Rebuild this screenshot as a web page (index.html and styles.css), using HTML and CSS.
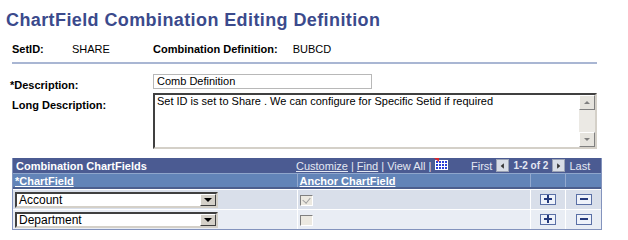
FILE: index.html
```html
<!DOCTYPE html>
<html lang="en">
  <head>
    <meta charset="UTF-8" />
    <title>ChartField Combination Editing Definition</title>
    <link rel="stylesheet" href="styles.css">
  </head>
  <body>
    <h1 class="page-title">ChartField Combination Editing Definition</h1>

    <div class="key-row">
      <span class="key-label setid-label">SetID:</span>
      <span class="key-value setid-value">SHARE</span>
      <span class="key-label">Combination Definition:</span>
      <span class="key-value">BUBCD</span>
    </div>
    <div class="divider"></div>

    <div class="field-row descr-row">
      <label class="field-label req">*Description:</label>
      <div class="text-input">Comb Definition</div>
    </div>
    <div class="field-row long-row">
      <label class="field-label">Long Description:</label>
      <div class="text-area">
        <div class="text-area-body">Set ID is set to Share . We can configure for Specific Setid if required</div>
        <div class="scrollbar">
          <span class="scroll-btn up"></span>
          <span class="scroll-track"></span>
          <span class="scroll-btn down"></span>
        </div>
      </div>
    </div>

    <div class="grid">
      <div class="grid-title">
        <span class="grid-name">Combination ChartFields</span>
        <span class="grid-tools">
          <a href="#">Customize</a> | <a href="#">Find</a> | View All |
          <svg class="grid-icon" viewBox="0 0 14 12" width="14" height="12">
            <rect x="1" y="2" width="13" height="10" fill="#ffffff" />
            <g fill="#2b3fd8">
              <rect x="2" y="3" width="2" height="2" /><rect x="5" y="3" width="2" height="2" /><rect x="8" y="3" width="2" height="2" /><rect x="11" y="3" width="2" height="2" />
              <rect x="2" y="6" width="2" height="2" /><rect x="5" y="6" width="2" height="2" /><rect x="8" y="6" width="2" height="2" /><rect x="11" y="6" width="2" height="2" />
              <rect x="2" y="9" width="2" height="2" /><rect x="5" y="9" width="2" height="2" /><rect x="8" y="9" width="2" height="2" /><rect x="11" y="9" width="2" height="2" />
            </g>
            <path d="M0 0 L5 0 L5 4 Z" fill="#d8262e" />
          </svg>
        </span>
        <span class="grid-nav">
          First
          <span class="nav-btn"><svg viewBox="0 0 12 12" width="12" height="12"><path d="M7.5 3 L7.5 9 L4 6 Z" fill="#333" /></svg></span>
          <span class="nav-count">1-2 of 2</span>
          <span class="nav-btn"><svg viewBox="0 0 12 12" width="12" height="12"><path d="M4.5 3 L4.5 9 L8 6 Z" fill="#333" /></svg></span>
          Last
        </span>
      </div>

      <div class="grid-row grid-head">
        <div class="cell col-field"><a href="#">*ChartField</a></div>
        <div class="cell col-anchor"><a href="#">Anchor ChartField</a></div>
        <div class="cell col-btn"></div>
        <div class="cell col-btn"></div>
      </div>

      <div class="grid-row odd">
        <div class="cell col-field">
          <div class="select">
            <span class="select-text">Account</span>
            <span class="select-arrow"></span>
          </div>
        </div>
        <div class="cell col-anchor"><span class="checkbox checked"></span></div>
        <div class="cell col-btn"><span class="row-btn plus"></span></div>
        <div class="cell col-btn"><span class="row-btn minus"></span></div>
      </div>

      <div class="grid-row even">
        <div class="cell col-field">
          <div class="select">
            <span class="select-text">Department</span>
            <span class="select-arrow"></span>
          </div>
        </div>
        <div class="cell col-anchor"><span class="checkbox"></span></div>
        <div class="cell col-btn"><span class="row-btn plus"></span></div>
        <div class="cell col-btn"><span class="row-btn minus"></span></div>
      </div>
    </div>
  </body>
</html>
```

FILE: styles.css
```css
/* base */
* {
  box-sizing: border-box;
  margin: 0;
  padding: 0;
}
body {
  font-family: "Liberation Sans", Arial, sans-serif;
  font-size: 11px;
  color: #000000;
  background: #ffffff;
  width: 628px;
  height: 240px;
  overflow: hidden;
}
a {
  color: inherit;
}

/* page title */
.page-title {
  font-size: 18px;
  letter-spacing: 0.4px;
  font-weight: bold;
  color: #3b4a8c;
  padding: 10px 0 0 6px;
  height: 41px;
}

/* setid / definition row */
.key-row {
  display: flex;
  align-items: center;
  padding-left: 12px;
  height: 15px;
}
.key-label {
  font-weight: bold;
  margin-right: 15px;
}
.setid-label {
  width: 60px;
  margin-right: 0;
}
.setid-value {
  width: 81px;
}
.divider {
  margin: 6px 31px 0 12px;
  height: 2px;
  background: #a9b6d3;
}

/* form fields */
.field-row {
  display: flex;
  align-items: flex-start;
}
.descr-row {
  height: 26px;
}
.field-label {
  width: 153px;
  padding-left: 12px;
  font-weight: bold;
  padding-top: 9px;
}
.field-label.req {
  padding-left: 10px;
  padding-top: 15px;
}
.text-input {
  margin-top: 10px;
  width: 219px;
  height: 15px;
  border: 1px solid #b8b8b8;
  padding: 0 3px;
  line-height: 13px;
}
.text-area {
  margin-top: 3px;
  width: 444px;
  height: 56px;
  border: 2px solid #404040;
  border-right-color: #d4d0c8;
  border-bottom-color: #d4d0c8;
  display: flex;
}
.text-area-body {
  flex: 1;
  padding: 0 2px;
  line-height: 13px;
}
.scrollbar {
  width: 16px;
  display: flex;
  flex-direction: column;
  background: #ebe9e4;
}
.scroll-track {
  flex: 1;
}
.scroll-btn {
  height: 15px;
  background: #e6e4de;
  border: 1px solid #ffffff;
  border-right-color: #808080;
  border-bottom-color: #808080;
  position: relative;
}
.scroll-btn::after {
  content: "";
  position: absolute;
  left: 4px;
  top: 5px;
  border-left: 3px solid transparent;
  border-right: 3px solid transparent;
}
.scroll-btn.up::after {
  border-bottom: 3px solid #808080;
}
.scroll-btn.down::after {
  border-top: 3px solid #808080;
}

/* grid */
.grid {
  margin: 9px 0 0 12px;
  width: 590px;
  border: 1px solid #8393bd;
  border-top: none;
}
.grid-title {
  display: flex;
  align-items: center;
  height: 15px;
  background: #4b5b92;
  color: #ffffff;
  padding-left: 3px;
}
.grid-name {
  font-weight: bold;
  width: 280px;
}
.grid-tools {
  display: flex;
  align-items: center;
  gap: 3px;
  color: #e4e8f2;
  width: 175px;
}
.grid-tools a {
  color: #e4e8f2;
}
.grid-icon {
  margin-top: -4px;
}
.grid-nav {
  display: flex;
  align-items: center;
  gap: 4px;
  color: #e4e8f2;
}
.nav-count {
  font-weight: bold;
  font-size: 10px;
}
.nav-btn {
  display: inline-flex;
  width: 13px;
  height: 13px;
  background: #d8dde6;
  border: 1px solid #9aa2b4;
}
.grid-row {
  display: flex;
  border-top: 1px solid #ffffff;
}
.grid-head {
  height: 16px;
  background: #6284b8;
  border-top-color: #8fa6cc;
  border-bottom: 2px solid #4c5f8e;
}
.grid-head a {
  color: #ffffff;
  font-weight: bold;
}
.cell {
  display: flex;
  align-items: center;
  border-right: 1px solid #ffffff;
  padding-left: 3px;
}
.grid-head .cell {
  border-right-color: #93a9cf;
}
.cell:last-child {
  border-right: none;
}
.col-field {
  width: 285px;
  padding-left: 2px;
}
.col-anchor {
  width: 234px;
  padding-left: 2px;
}
.col-btn {
  width: 35px;
  justify-content: center;
  padding-left: 0;
}
.grid-row.odd {
  height: 20px;
  background: #d9dfea;
}
.grid-row.even {
  height: 20px;
  background: #e9edf4;
}

.select {
  width: 203px;
  height: 16px;
  border: 2px solid #404040;
  border-right-color: #d4d0c8;
  border-bottom-color: #d4d0c8;
  background: #ffffff;
  display: flex;
  align-items: center;
}
.select-text {
  flex: 1;
  padding-left: 2px;
  font-size: 12px;
}
.select-arrow {
  width: 16px;
  height: 12px;
  background: #d4d0c8;
  border: 1px solid #ffffff;
  border-right-color: #404040;
  border-bottom-color: #404040;
  position: relative;
}
.select-arrow::after {
  content: "";
  position: absolute;
  left: 3px;
  top: 3px;
  border-left: 4px solid transparent;
  border-right: 4px solid transparent;
  border-top: 4px solid #000000;
}

.checkbox {
  width: 13px;
  height: 11px;
  background: #ece9e1;
  border: 1px solid #ffffff;
  border-top-color: #808080;
  border-left-color: #808080;
  position: relative;
  margin-top: 2px;
}
.checkbox.checked::after {
  content: "";
  position: absolute;
  left: 3px;
  top: 0;
  width: 4px;
  height: 6px;
  border: solid #a0a0a0;
  border-width: 0 1px 1px 0;
  transform: rotate(40deg);
}

.row-btn {
  width: 16px;
  height: 11px;
  border: 1px solid #5a6fa5;
  background: #eef2fa;
  position: relative;
}
.row-btn::before,
.row-btn::after {
  content: "";
  position: absolute;
  background: #253a7c;
}
.row-btn::before {
  left: 3px;
  top: 3px;
  width: 8px;
  height: 2px;
}
.row-btn.plus::after {
  left: 6px;
  top: 0;
  width: 2px;
  height: 8px;
}
```
